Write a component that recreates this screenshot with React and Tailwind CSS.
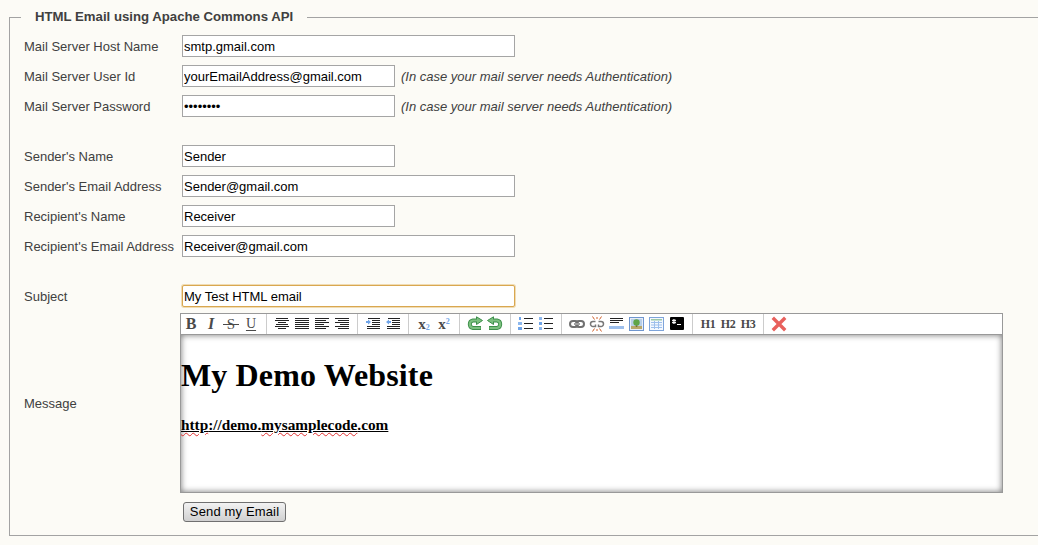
import React from 'react';

const Lines = ({ rows }) => (
  <svg width="16" height="16" viewBox="0 0 16 16">
    {rows.map(([x1, x2], i) => (
      <rect key={i} x={x1} y={2 + i * 2} width={x2 - x1} height="1" fill="#222" />
    ))}
  </svg>
);

const Indent = ({ flip }) => (
  <svg width="16" height="16" viewBox="0 0 16 16">
    <rect x="3" y="2" width="12" height="1" fill="#222" />
    <rect x="7" y="4" width="8" height="1" fill="#222" />
    <rect x="7" y="6" width="8" height="1" fill="#222" />
    <rect x="7" y="8" width="8" height="1" fill="#222" />
    <rect x="2" y="10" width="13" height="1" fill="#222" />
    <rect x="2" y="12" width="13" height="1" fill="#222" />
    {flip ? (
      <path d="M1 6l3-2.500V5h2v2H4v1.500z" fill="#6fa4e8" />
    ) : (
      <path d="M6 6L3 3.500V5H1v2h2v1.500z" fill="#6fa4e8" />
    )}
  </svg>
);

const Arrow = ({ flip }) => (
  <svg width="16" height="16" viewBox="0 0 16 16" className={flip ? '-scale-x-100' : ''}>
    <path d="M10 4.500H6a3.800 3.800 0 0 0 0 7.500h8" fill="none" stroke="#3d8f4a" strokeWidth="4" />
    <path d="M9.500 .8L15.500 4.500 9.500 8.500z" fill="#7cc07f" stroke="#3d8f4a" strokeWidth="1" />
    <path d="M10 4.500H6a3.800 3.800 0 0 0 0 7.500h7.500" fill="none" stroke="#7cc07f" strokeWidth="2.200" />
  </svg>
);

const OrderedList = () => (
  <svg width="16" height="16" viewBox="0 0 16 16">
    <rect x="1" y="1" width="2" height="3" fill="#6fa4e8" />
    <rect x="0" y="6" width="4" height="3" fill="#8db8ee" />
    <rect x="0" y="11" width="4" height="3" fill="#6fa4e8" />
    <rect x="6" y="2" width="9" height="1" fill="#222" />
    <rect x="6" y="7" width="9" height="1" fill="#222" />
    <rect x="6" y="12" width="9" height="1" fill="#222" />
  </svg>
);

const BulletList = () => (
  <svg width="16" height="16" viewBox="0 0 16 16">
    <rect x="1" y="1" width="3" height="3" fill="#8db8ee" />
    <rect x="1" y="6" width="3" height="3" fill="#6fa4e8" />
    <rect x="1" y="11" width="3" height="3" fill="#8db8ee" />
    <rect x="6" y="2" width="9" height="1" fill="#222" />
    <rect x="6" y="7" width="9" height="1" fill="#222" />
    <rect x="6" y="12" width="9" height="1" fill="#222" />
  </svg>
);

const LinkIcon = () => (
  <svg width="16" height="16" viewBox="0 0 16 16" fill="none" stroke="#707070" strokeWidth="2">
    <rect x="1" y="5" width="8" height="6" rx="3" />
    <rect x="7" y="5" width="8" height="6" rx="3" />
    <path d="M5 8h6" stroke="#a0a0a0" />
  </svg>
);

const UnlinkIcon = () => (
  <svg width="16" height="16" viewBox="0 0 16 16" fill="none">
    <path d="M6.500 5.500H4a2.500 2.500 0 0 0 0 5h2.500v-2M9.500 5.500H12a2.500 2.500 0 0 1 0 5H9.500v-2" stroke="#777" strokeWidth="1.500" />
    <path d="M3.500 .5L5.500 3.500M12.500 .5L10.500 3.500M8 1v2M3.500 15.500L5.500 12.500M12.500 15.500L10.500 12.500M8 13v2" stroke="#d0602a" strokeWidth="1" />
  </svg>
);

const RuleIcon = () => (
  <svg width="16" height="16" viewBox="0 0 16 16">
    <rect x="1" y="2" width="13" height="1" fill="#222" />
    <rect x="1" y="4" width="13" height="1" fill="#222" />
    <rect x="1" y="6" width="9" height="1" fill="#222" />
    <rect x="0" y="10" width="15" height="3" fill="#9dbfec" />
  </svg>
);

const ImageIcon = () => (
  <svg width="16" height="16" viewBox="0 0 16 16">
    <rect x=".5" y="1.500" width="14" height="13" fill="#e8eef8" stroke="#6f96cf" />
    <rect x="2" y="3" width="11" height="10" fill="#b8cfe8" />
    <rect x="2" y="10" width="11" height="3" fill="#b9a86a" />
    <rect x="6.800" y="8" width="1.500" height="3" fill="#7a6a3f" />
    <circle cx="7.500" cy="6.500" r="3.200" fill="#5fa548" />
  </svg>
);

const TableIcon = () => (
  <svg width="16" height="16" viewBox="0 0 16 16">
    <rect x=".5" y="1.500" width="14" height="13" fill="#f4f8fe" stroke="#7ea4da" />
    <rect x="2" y="3" width="11" height="1.500" fill="#9cc8a8" />
    <path d="M2 6.500h11M2 9h11M2 11.500h11M5.500 5v8M9.500 5v8" stroke="#9dbfec" strokeWidth="1" />
  </svg>
);

const TerminalIcon = () => (
  <svg width="16" height="16" viewBox="0 0 16 16">
    <rect x="1" y="1" width="14" height="13" rx="1" fill="#000" />
    <path d="M3 4.500h4M3 6.500h4M4.300 3v5M5.800 3v5" stroke="#fff" strokeWidth=".9" />
    <rect x="8" y="8" width="4" height="1" fill="#fff" />
  </svg>
);

const RemoveIcon = () => (
  <svg width="16" height="16" viewBox="0 0 16 16">
    <path d="M3 3l10 10M13 3L3 13" stroke="#e8605c" strokeWidth="3.400" strokeLinecap="square" />
  </svg>
);

const Glyph = ({ children, className = '' }) => (
  <span className={`font-['Liberation_Serif',serif] leading-4 text-[#4a4a4a] ${className}`}>{children}</span>
);

const Script = ({ sup, children }) => (
  <span className="flex items-start font-['Liberation_Serif',serif] text-[15px] font-bold leading-4 text-[#4a4a4a]">
    {children}
    <span className={`text-[8px] leading-none text-[#6fa4e8] ${sup ? 'mt-0.5' : 'mt-2'}`}>2</span>
  </span>
);

const Strike = () => (
  <span className="relative flex w-4 justify-center">
    <Glyph className="text-[15px]">S</Glyph>
    <span className="absolute top-2 left-0 h-px w-4 bg-[#4a4a4a]" />
  </span>
);

const groups = [
  [
    <Glyph className="text-base font-bold">B</Glyph>,
    <Glyph className="text-base font-bold italic">I</Glyph>,
    <Strike />,
    <Glyph className="text-sm underline underline-offset-2">U</Glyph>,
  ],
  [
    <Lines rows={[[2, 14], [1, 15], [4, 12], [2, 14], [1, 15], [4, 12]]} />,
    <Lines rows={[[1, 15], [1, 15], [1, 15], [1, 15], [1, 15], [1, 15]]} />,
    <Lines rows={[[1, 15], [1, 12], [1, 15], [1, 10], [1, 15], [1, 12]]} />,
    <Lines rows={[[1, 15], [4, 15], [1, 15], [6, 15], [1, 15], [4, 15]]} />,
  ],
  [<Indent />, <Indent flip />],
  [<Script>x</Script>, <Script sup>x</Script>],
  [<Arrow />, <Arrow flip />],
  [<OrderedList />, <BulletList />],
  [<LinkIcon />, <UnlinkIcon />, <RuleIcon />, <ImageIcon />, <TableIcon />, <TerminalIcon />],
  [
    <Glyph className="text-xs font-bold tracking-[-0.3px]">H1</Glyph>,
    <Glyph className="text-xs font-bold tracking-[-0.3px]">H2</Glyph>,
    <Glyph className="text-xs font-bold tracking-[-0.3px]">H3</Glyph>,
  ],
  [<RemoveIcon />],
];

const Toolbar = () => (
  <div className="flex h-[22px] items-center border border-[#999] bg-white">
    {groups.map((group, i) => (
      <div
        key={i}
        className={`flex h-5 items-center border-[#ccc] ${i === 0 ? 'pr-[5px]' : 'px-[5px]'} ${i < groups.length - 1 ? 'border-r' : ''}`}
      >
        {group.map((icon, j) => (
          <span key={j} className="flex w-5 items-center justify-center">
            {icon}
          </span>
        ))}
      </div>
    ))}
  </div>
);

const Row = ({ label, note, wide, type = 'text', value, focused }) => (
  <div className="flex h-[22px] items-center">
    <label className="w-[158px] shrink-0 pt-px text-[13px] text-[#404040]">{label}</label>
    <input
      type={type}
      readOnly
      defaultValue={value}
      className={`h-[22px] border bg-white px-px font-['Liberation_Sans',sans-serif] text-[13px] text-black outline-none ${
        wide ? 'w-[333px]' : 'w-[213px]'
      } ${focused ? 'rounded-[2px] border-[#d9a750] shadow-[0_0_0_1px_#f0dcb4]' : 'border-[#a5a5a5]'}`}
    />
    {note && <span className="ml-1.5 pt-px text-[13px] italic text-[#404040]">{note}</span>}
  </div>
);

const App = () => {
  return (
    <div className="h-[545px] overflow-hidden bg-[#fcfbf6] pt-[9px] pl-[9px] font-['Liberation_Sans',Arial,sans-serif]">
      <fieldset className="h-[527px] border-t border-b border-l border-[#a3a3a3] pt-2.5 pl-3.5">
        <legend className="-ml-[3px] h-4 px-3.5 text-[13.2px] leading-4 font-bold text-[#404040]">
          HTML Email using Apache Commons API
        </legend>

        <div className="flex flex-col gap-2">
          <Row label="Mail Server Host Name" value="smtp.gmail.com" wide />
          <Row label="Mail Server User Id" value="yourEmailAddress@gmail.com" note="(In case your mail server needs Authentication)" />
          <Row label="Mail Server Password" type="password" value="password" note="(In case your mail server needs Authentication)" />
        </div>

        <div className="mt-7 flex flex-col gap-2">
          <Row label="Sender's Name" value="Sender" />
          <Row label="Sender's Email Address" value="Sender@gmail.com" wide />
          <Row label="Recipient's Name" value="Receiver" />
          <Row label="Recipient's Email Address" value="Receiver@gmail.com" wide />
        </div>

        <div className="mt-7">
          <Row label="Subject" value="My Test HTML email" wide focused />
        </div>

        <div className="mt-1.5 flex items-center">
          <label className="w-[156px] shrink-0 pt-0.5 text-[13px] text-[#404040]">Message</label>
          <div className="w-[823px]">
            <Toolbar />
            <div className="h-[158px] border border-t-0 border-[#999] bg-white font-['Liberation_Serif',serif] text-black shadow-[inset_0_0_6px_rgba(0,0,0,0.55)]">
              <h1 className="pt-[22px] text-[32px] leading-[37px] font-bold tracking-[0.13px]">My Demo Website</h1>
              <p className="mt-[22px] text-[15.3px] leading-[18px] font-bold underline">
                <span className="underline decoration-[#e03030] decoration-wavy decoration-1 underline-offset-2">http</span>
                ://demo.
                <span className="underline decoration-[#e03030] decoration-wavy decoration-1 underline-offset-2">mysamplecode</span>
                .com
              </p>
            </div>
          </div>
        </div>

        <button className="mt-[9px] ml-[159px] h-5 w-[103px] rounded-[3px] border border-[#707070] bg-gradient-to-b from-[#f2f2f2] to-[#d0d0d0] text-[13px] leading-4 tracking-[0.15px] text-black">
          Send my Email
        </button>
      </fieldset>
    </div>
  );
};

export default App;
